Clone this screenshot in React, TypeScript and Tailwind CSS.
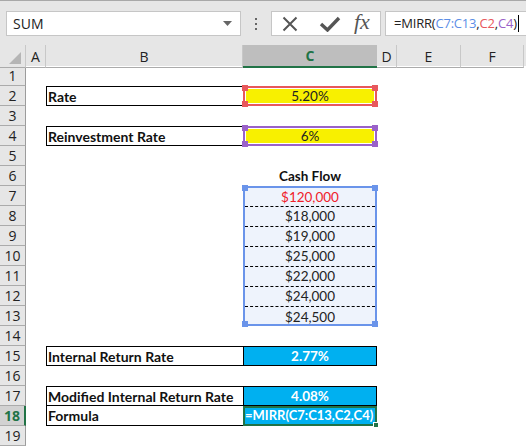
import React from "react";

const F = { fontFamily: "Lato, 'Open Sans', sans-serif" };

const rows = Array.from({ length: 19 }, (_, i) => i + 1);

function Corners({ color }: { color: string }) {
  const base = "absolute w-[6px] h-[6px] " + color;
  return (
    <>
      <div className={base + " -left-[3px] -top-[3px]"} />
      <div className={base + " -right-[3px] -top-[3px]"} />
      <div className={base + " -left-[3px] -bottom-[3px]"} />
      <div className={base + " -right-[3px] -bottom-[3px]"} />
    </>
  );
}

export default function App() {
  const cols = "grid-cols-[26px_20px_197px_134px_20px_64px_63px]";
  const cell = "h-[20px] flex items-center text-[13.5px] text-[#111]";
  const cashflow = ["$18,000", "$19,000", "$25,000", "$22,000", "$24,000", "$24,500"];

  const renderCells = (r: number) => {
    const out: React.ReactNode[] = [];
    out.push(<div key="a" className={cell} />);
    const bLabels: Record<number, string> = {
      2: "Rate",
      4: "Reinvestment Rate",
      15: "Internal Return Rate",
      17: "Modified Internal Return Rate",
      18: "Formula",
    };
    if (bLabels[r]) {
      const topB = r === 18 ? "border-t-0" : "border-t";
      out.push(
        <div key="b" className={"h-[20px] flex items-center text-[14px] text-[#111] border-l border-b border-black font-bold pl-[1px] " + topB}>
          {bLabels[r]}
        </div>
      );
    } else out.push(<div key="b" className={cell} />);
    if (r === 2 || r === 4) {
      const red = r === 2;
      out.push(
        <div key="c" className={"relative h-[20px] border-2 " + (red ? "border-[#e8585c]" : "border-[#9a62c9]")}>
          <div className="h-full border border-white bg-[#f8f000] flex items-center justify-center text-[13.5px] text-[#222]">
            {red ? "5.20%" : "6%"}
          </div>
          <Corners color={red ? "bg-[#e8585c]" : "bg-[#9a62c9]"} />
        </div>
      );
    } else if (r === 6) {
      out.push(
        <div key="c" className={cell + " justify-center font-bold"}>
          Cash Flow
        </div>
      );
    } else if (r === 7) {
      out.push(
        <div key="c" className="relative row-span-7 border-2 border-[#6a94ea] bg-[#eef3fc] flex flex-col">
          <div className="h-[19px] flex items-center justify-center text-[13.5px] text-[#f0202a] border-b border-dashed border-black">
            $120,000
          </div>
          {cashflow.map((v, i) => (
            <div
              key={v}
              className={
                "h-[20px] flex items-center justify-center text-[13.5px] text-[#222] " +
                (i < cashflow.length - 1 ? "border-b border-dashed border-black" : "")
              }
            >
              {v}
            </div>
          ))}
          <Corners color="bg-[#6a94ea]" />
        </div>
      );
    } else if (r > 7 && r <= 13) {
      // covered by row-span
    } else if (r === 15 || r === 17) {
      out.push(
        <div key="c" className={cell + " border border-black bg-[#00b0f0] justify-center font-bold text-white"}>
          {r === 15 ? "2.77%" : "4.08%"}
        </div>
      );
    } else if (r === 18) {
      out.push(
        <div key="c" className="relative h-[20px] border-2 border-[#217346] bg-[#00b0f0] flex items-center text-[13px] font-bold text-white">
          <span className="whitespace-nowrap">=MIRR(C7:C13,C2,C4)</span>
          <div className="absolute -right-[4px] -bottom-[4px] w-[6px] h-[6px] bg-[#217346] border border-white" />
        </div>
      );
    } else out.push(<div key="c" className={cell} />);
    out.push(<div key="d" className={cell} />);
    out.push(<div key="e" className={cell} />);
    out.push(<div key="f" className={cell} />);
    return out;
  };

  return (
    <div className="w-[526px] h-[447px] overflow-hidden bg-white relative" style={F}>
      {/* toolbar */}
      <div className="h-[45px] bg-[#e6e6e6] border-t border-[#a8a8a8] flex items-start pt-[10px]" style={{ fontFamily: "'Open Sans', 'Noto Sans', sans-serif" }}>
        <div className="ml-[6px] shrink-0 w-[235px] h-[25px] bg-white border border-[#c6c6c6] flex items-center pl-[6px] pr-[8px] text-[14px] text-[#222]">
          <span className="flex-1">SUM</span>
          <svg width="9" height="5" viewBox="0 0 9 5">
            <path d="M0 0 L9 0 L4.5 5 Z" fill="#666" />
          </svg>
        </div>
        <div className="shrink-0 w-[30px] h-[25px] flex flex-col items-center justify-center gap-[3px]">
          <div className="w-[2px] h-[2px] bg-[#666]" />
          <div className="w-[2px] h-[2px] bg-[#666]" />
          <div className="w-[2px] h-[2px] bg-[#666]" />
        </div>
        <div className="shrink-0 w-[110px] h-[25px] bg-white border border-[#c6c6c6] flex items-center pl-[10px]">
          <svg width="16" height="16" viewBox="0 0 16 16">
            <path d="M1.5 1.5 L14.5 14.5 M14.5 1.5 L1.5 14.5" stroke="#555" strokeWidth="2" />
          </svg>
          <svg className="ml-[21px]" width="22" height="16" viewBox="0 0 22 16">
            <path d="M2 8 L8.5 14 L20 2" stroke="#555" strokeWidth="3.4" fill="none" />
          </svg>
          <span className="ml-[13px] text-[22px] italic text-[#555] leading-none -mt-[3px]" style={{ fontFamily: "'Liberation Serif', serif" }}>
            fx
          </span>
        </div>
        <div className="ml-[4px] min-w-0 flex-1 overflow-hidden h-[25px] bg-white border border-[#c6c6c6] border-r-0 flex items-center pl-[8px] text-[13px] tracking-[-0.2px] text-[#222] whitespace-nowrap">
          <span>=MIRR(</span>
          <span className="text-[#5b8ee6]">C7:C13</span>
          <span>,</span>
          <span className="text-[#e8585c]">C2</span>
          <span>,</span>
          <span className="text-[#9a62c9]">C4</span>
          <span>)</span>
          <span className="w-[1px] h-[17px] bg-black ml-[1px] shrink-0" />
        </div>
      </div>

      {/* column headers */}
      <div className={"grid " + cols + " h-[21px] bg-[#e6e6e6] text-[14px] text-[#222]"} style={{ fontFamily: "'Open Sans', sans-serif" }}>
        <div className="relative border-r border-[#c8c8c8] border-b border-b-[#ababab]">
          <svg className="absolute right-[4px] bottom-[3px]" width="12" height="12" viewBox="0 0 12 12">
            <path d="M12 0 L12 12 L0 12 Z" fill="#b5b5b5" />
          </svg>
        </div>
        <div className="flex items-center justify-center border-r border-[#c8c8c8] border-b border-b-[#ababab]">A</div>
        <div className="flex items-center justify-center border-r border-[#c8c8c8] border-b border-b-[#ababab]">B</div>
        <div className="flex items-center justify-center bg-[#bebebe] border-b-2 border-[#217346] font-bold text-[#217346]">C</div>
        <div className="flex items-center justify-center border-r border-[#c8c8c8] border-b border-b-[#ababab]">D</div>
        <div className="flex items-center justify-center border-r border-[#c8c8c8] border-b border-b-[#ababab]">E</div>
        <div className="flex items-center justify-center border-r border-[#c8c8c8] border-b border-b-[#ababab]">F</div>
      </div>

      {/* grid */}
      <div className={"grid " + cols + " auto-rows-[20px]"}>
        {rows.map((r) => (
          <React.Fragment key={r}>
            <div
              className={
                "h-[20px] flex items-center justify-center text-[14px] border-b border-[#ababab] " +
                (r === 18
                  ? "bg-[#d2d2d2] text-[#217346] font-bold border-r-2 border-r-[#217346]"
                  : "bg-[#e6e6e6] text-[#222] border-r border-r-[#9c9c9c]")
              }
              style={{ gridColumn: 1, gridRow: r, fontFamily: "'Open Sans', sans-serif" }}
            >
              {r}
            </div>
            {renderCells(r).map((node, i) => (
              <div key={i} className="contents">
                {node}
              </div>
            ))}
          </React.Fragment>
        ))}
      </div>
    </div>
  );
}
